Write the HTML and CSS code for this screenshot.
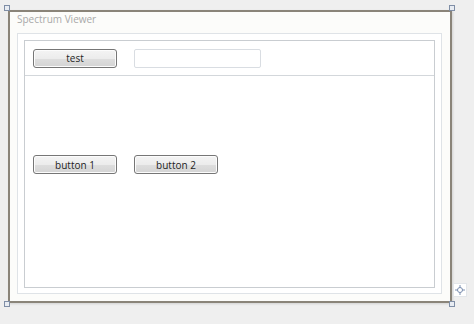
FILE: index.html
```html
<!DOCTYPE html>
<html lang="en">
<head>
    <meta charset="UTF-8">
    <meta name="viewport" content="width=device-width, initial-scale=1.0">
    <title>Spectrum Viewer</title>
    <link rel="stylesheet" href="styles.css">
</head>
<body>
    <div class="surface">
        <div class="window">
            <span class="handle handle-tl"></span>
            <span class="handle handle-tr"></span>
            <span class="handle handle-bl"></span>
            <span class="handle handle-br"></span>
            <span class="anchor">
                <svg width="10" height="10" viewBox="0 0 10 10">
                    <circle cx="5" cy="5" r="2.5" fill="none" stroke="#7d8fb0" stroke-width="1"/>
                    <path d="M5 0v3M5 7v3M0 5h3M7 5h3" stroke="#7d8fb0" stroke-width="1"/>
                </svg>
            </span>

            <div class="title">Spectrum Viewer</div>
            <div class="grid-outer">
                <div class="grid-inner">
                    <div class="toolbar">
                        <button class="btn">test</button>
                        <input class="textbox" type="text">
                    </div>
                    <div class="content">
                        <button class="btn">button 1</button>
                        <button class="btn">button 2</button>
                    </div>
                </div>
            </div>
        </div>
    </div>
</body>
</html>
```

FILE: styles.css
```css
body {
    margin: 0;
    padding: 0;
    background-color: #efefef;
    font-family: "Open Sans", "Noto Sans", sans-serif;
}

.surface {
    padding: 10px 0 0 8px;
    height: 314px;
}

.window {
    position: relative;
    width: 440px;
    height: 289px;
    border: 2px solid #8a8479;
    background: #fcfcfa;
    box-shadow: 1px 1px 2px rgba(0, 0, 0, 0.12);
}

.title {
    height: 21px;
    padding-left: 7px;
    font-size: 10px;
    line-height: 15px;
    color: #a9a9a9;
}

.grid-outer {
    margin-left: 7px;
    width: 411px;
    height: 247px;
    border: 1px solid #dfe3e7;
    background: #fff;
    padding: 6px;
}

.grid-inner {
    height: 246px;
    border: 1px solid #c9cdd1;
    background: #fff;
}

.toolbar {
    display: flex;
    align-items: center;
    gap: 17px;
    height: 34px;
    padding-left: 8px;
    border-bottom: 1px solid #d3d7db;
}

.content {
    display: flex;
    gap: 17px;
    padding: 79px 0 0 8px;
}

.btn {
    width: 84px;
    height: 19px;
    padding: 0;
    border: 1px solid #767676;
    border-radius: 3px;
    background: linear-gradient(#f4f4f4, #ececec 50%, #dedede 51%, #d4d4d4);
    color: #1e1e1e;
    font-family: "Open Sans", "Noto Sans", sans-serif;
    font-size: 10px;
    line-height: 16px;
    box-shadow: inset 0 0 0 1px #fcfcfc;
}

.textbox {
    width: 127px;
    height: 19px;
    box-sizing: border-box;
    border: 1px solid #d9dde2;
    border-radius: 2px;
    background: #fff;
    padding: 0;
}

.handle {
    position: absolute;
    width: 4px;
    height: 4px;
    border: 1px solid #7f8ea6;
    background: #e8ecf2;
}

.handle-tl { left: -6px; top: -7px; }
.handle-tr { right: -5px; top: -7px; }
.handle-bl { left: -6px; bottom: -6px; }
.handle-br { right: -5px; bottom: -6px; }

.anchor {
    position: absolute;
    right: -17px;
    bottom: 4px;
    width: 12px;
    height: 12px;
    display: flex;
    align-items: center;
    justify-content: center;
    background: #fff;
    border: 1px solid #e3e6ea;
}
```
